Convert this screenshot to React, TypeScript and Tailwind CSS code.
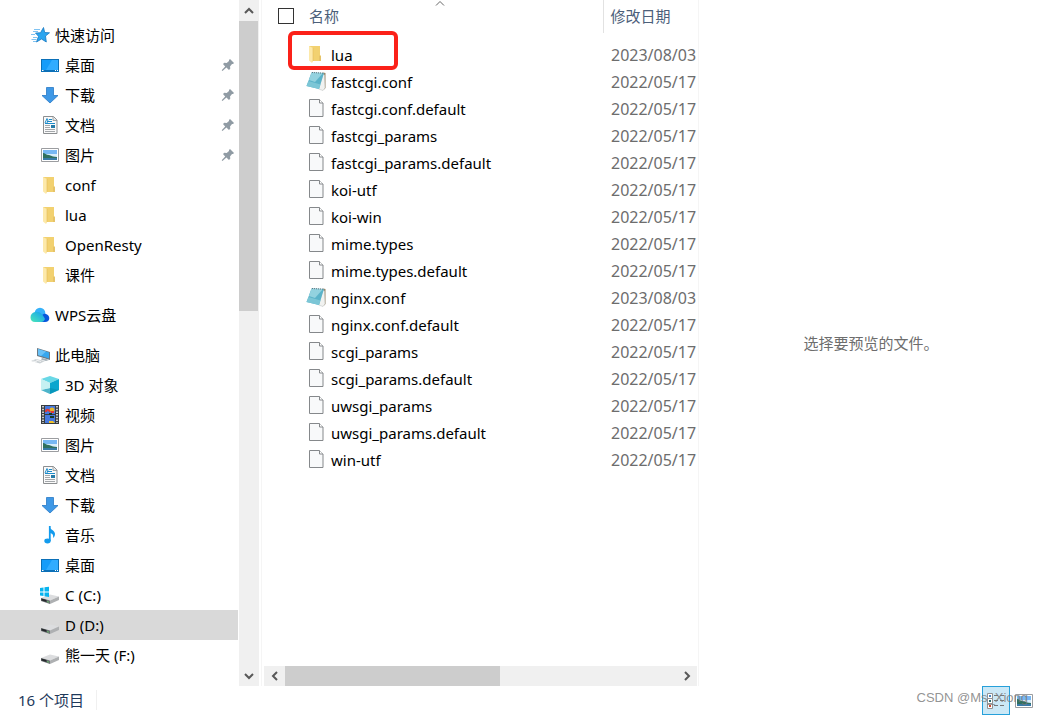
import { useState } from "react";
import type { ReactNode } from "react";
import clsx from "clsx";

type IconName =
  | "star"
  | "desktop"
  | "download"
  | "document"
  | "picture"
  | "folder"
  | "cloud"
  | "computer"
  | "cube"
  | "video"
  | "music"
  | "systemDrive"
  | "drive"
  | "notepad"
  | "file";

const driveBody = (
  <>
    <path d="M1 13l9-3.500 9 2-9 4z" fill="#dcdddf" />
    <path d="M1 13l9 2.500v3.500l-9-3z" fill="#6b6f72" />
    <path d="M10 15.500l9-4v3.500l-9 4z" fill="#aeb0b2" />
    <path d="M1.500 13.500l5 1.500v2l-5-1.500z" fill="#24282b" />
    <path d="M7 16l2 .7v1l-2-.7z" fill="#64b96a" />
  </>
);

const icons: Record<IconName, ReactNode> = {
  star: (
    <>
      <path d="M13.500 2.500l1.200 5 4.800.3-4 3.200.8 6-4.800-3-5 3 2-5.700L5.500 8l5-.2z" fill="#2ba5ef" stroke="#1679c2" strokeWidth=".8" />
      <path d="M4 4.500h6M3 6.500h5M1 9.500h4M3 12.500h4M1.500 14.500h5M3 16.500h3" stroke="#70bcf0" strokeWidth=".9" />
    </>
  ),
  desktop: (
    <>
      <path d="M1 4h18v13H1z" fill="#0b70b8" />
      <path d="M2 5h16v10H2z" fill="#159cf9" />
      <path d="M12 5h6v10H6z" fill="#31acff" />
      <path d="M2 15.500h1.500M15 15.500h1M17 15.500h1" stroke="#fff" />
    </>
  ),
  download: (
    <path d="M6.500 2.500h7v8h4.500l-8 7.500-8-7.500h4.500z" fill="#3e98e6" stroke="#2879c5" strokeWidth=".8" />
  ),
  document: (
    <>
      <path d="M3.500 1.500h10l3.500 3.500v13.500H3.500z" fill="#fafafa" stroke="#8c8f91" />
      <path d="M13 2v3.500h4" fill="#e5e5e5" stroke="#8c8f91" strokeWidth=".8" />
      <path d="M9 4.500h3M8 6.500h4M5 8.500h10" stroke="#1d8bc9" />
      <path d="M5 8l2-4.500 1 1.500-1 3" fill="none" stroke="#1d8bc9" />
      <path d="M5 10.500h5M5 12.500h5M5 14.500h10M5 16.500h10" stroke="#a3a7aa" />
      <path d="M11 10h4v3h-4z" fill="#257ba8" />
    </>
  ),
  picture: (
    <>
      <path d="M1.500 3.500h17v13h-17z" fill="#fff" stroke="#9b9da0" />
      <path d="M3 5h14v10H3z" fill="#77b7f3" />
      <path d="M3 9h14v3H3z" fill="#d7ecfb" />
      <path d="M3 8c2 0 3 2 6 2 3 1 5 2 8 2v1H3z" fill="#31705f" />
      <path d="M3 13h14v2H3z" fill="#397aa7" />
    </>
  ),
  folder: (
    <>
      <path d="M3 2h11v9l1 1v5H5z" fill="#f2d170" />
      <path d="M13 11.500l2 .5v5h-2z" fill="#e6c369" />
      <path d="M3 2l4 2v13.500L6 19l-3-2.500z" fill="#fde9aa" />
      <path d="M7 4v13" stroke="#e4bd59" strokeWidth=".6" />
    </>
  ),
  cloud: (
    <>
      <defs>
        <linearGradient id="cloudLeft" x1="0" y1="1" x2="1" y2="0">
          <stop stopColor="#4be8b7" />
          <stop offset="1" stopColor="#129cf4" />
        </linearGradient>
      </defs>
      <circle cx="10" cy="8" r="5.300" fill="#36b2fa" />
      <path d="M11 17c-1-6 2-9 5-8 5 2 4 8-1 8z" fill="#0857dc" />
      <path d="M5 7c5-1 8 3 10 7-1 2-2 3-4 3H5C-1 17-1 8 5 7z" fill="url(#cloudLeft)" />
    </>
  ),
  computer: (
    <>
      <path d="M7 3l13 4v8L7 11z" fill="#6c7983" />
      <path d="M8 4l11 3.500v6L8 10z" fill="#37a7ef" />
      <path d="M8 4l8 2.500-5 4.400L8 10z" fill="#69c1f7" />
      <path d="M12 13l4 1 3 1-3 1-5-1.500z" fill="#a5b0b7" />
      <path d="M1 16l5-2 9 2-5 2.500z" fill="#cbd1d4" />
      <path d="M3 16l4 1M6 15l5 1.500" stroke="#f2f3f4" />
    </>
  ),
  cube: (
    <>
      <path d="M1 4l9-3 9 3-9 4z" fill="#69d8e6" />
      <path d="M1 4l9 4v11l-9-4z" fill="#b8edf0" />
      <path d="M10 8l9-4v11l-9 4z" fill="#0ba6ce" />
      <path d="M1 15l9-2 9 2-9 4z" fill="#058db0" opacity=".6" />
      <path d="M1 4l9 4v5l-9 2z" fill="#c6f1f2" />
    </>
  ),
  video: (
    <>
      <path d="M1 0h18v19H1z" fill="#393d40" />
      <path d="M5 1h10v8H5zM5 10h10v8H5z" fill="#4679e0" />
      <path d="M3 1v17M17 1v17" stroke="#eee" strokeWidth="1.600" strokeDasharray="1.500 1.200" />
      <circle cx="12" cy="5" r="2.500" fill="#e7b82b" />
      <path d="M6 7c0-3 3-3 4 0M11 7h3" stroke="#e23831" strokeWidth="2" fill="none" />
      <path d="M9 9h3M10 12h4" stroke="#183a24" strokeWidth="2" />
      <path d="M9 16h4l2 2H9z" fill="#f2c329" />
    </>
  ),
  music: (
    <>
      <ellipse cx="7.500" cy="16" rx="3.200" ry="2.400" fill="#139bed" />
      <path d="M9.800 1v15" stroke="#139bed" strokeWidth="1.800" />
      <path d="M9 1c1 4 6 4 6 8 0 2-1 3-2 4 1-5-3-5-4-5z" fill="#139bed" />
    </>
  ),
  systemDrive: (
    <>
      {driveBody}
      <path d="M0 3l3.500-.5v4H0zM4.500 2.200L9 1.700v4.800H4.500zM0 7.500h3.500V11L0 10.500zM4.500 7.500H9V12l-4.500-.8z" fill="#08b4ef" />
    </>
  ),
  drive: driveBody,
  notepad: (
    <>
      <path d="M17 1.500l2.500.5v15l-2 2z" fill="#9a8768" />
      <path d="M17 3l1.500 1 .5 13-2 2.500-4.500-1.500z" fill="#f1f2f0" stroke="#b9bdbd" strokeWidth=".5" />
      <path d="M5.500 1.500l12.500.5-5 16L.500 15z" fill="#5bb3c9" />
      <path d="M5.500 1.500L17 2 9 11l-6-2z" fill="#93d2df" />
      <path d="M.5 15l2-5 12 3.500-1.500 4.500z" fill="#7cc6d6" />
      <path d="M6 1.500l12 .7" stroke="#61747b" strokeDasharray="1 1" />
    </>
  ),
  file: (
    <>
      <path d="M3.500 1.500h10l3.500 3.500v13.500H3.500z" fill="#f8f9fa" stroke="#85888b" />
      <path d="M13.500 1.500v3.500H17" fill="#fff" stroke="#85888b" />
    </>
  ),
};

function Icon({ name }: { name: IconName }) {
  return (
    <svg viewBox="0 0 20 20" className="size-5 shrink-0" aria-hidden="true">
      {icons[name]}
    </svg>
  );
}

function Pin() {
  return (
    <svg viewBox="0 0 14 14" className="size-3.5 shrink-0" aria-hidden="true">
      <path d="M9 1l4 4-1 1h-1l-2 2.500.3 2L8 12l-2.600-2.400L1.500 13l-.8-.8L4.200 8.500 2 6l1.300-1.200 2.400.2L8 3V2z" fill="#909ba4" />
    </svg>
  );
}

function Chevron({ direction }: { direction: "up" | "down" | "left" | "right" }) {
  const paths = {
    up: "M2 8l4-4 4 4",
    down: "M2 4l4 4 4-4",
    left: "M8 2L4 6l4 4",
    right: "M4 2l4 4-4 4",
  };
  return (
    <svg viewBox="0 0 12 12" className="size-3" aria-hidden="true">
      <path d={paths[direction]} fill="none" stroke="#585858" strokeWidth="2" />
    </svg>
  );
}

interface NavItem {
  label: string;
  icon: IconName;
  pinned?: boolean;
}

const groups: { title: string; icon: IconName; items: NavItem[] }[] = [
  {
    title: "快速访问",
    icon: "star",
    items: [
      { label: "桌面", icon: "desktop", pinned: true },
      { label: "下载", icon: "download", pinned: true },
      { label: "文档", icon: "document", pinned: true },
      { label: "图片", icon: "picture", pinned: true },
      { label: "conf", icon: "folder" },
      { label: "lua", icon: "folder" },
      { label: "OpenResty", icon: "folder" },
      { label: "课件", icon: "folder" },
    ],
  },
  { title: "WPS云盘", icon: "cloud", items: [] },
  {
    title: "此电脑",
    icon: "computer",
    items: [
      { label: "3D 对象", icon: "cube" },
      { label: "视频", icon: "video" },
      { label: "图片", icon: "picture" },
      { label: "文档", icon: "document" },
      { label: "下载", icon: "download" },
      { label: "音乐", icon: "music" },
      { label: "桌面", icon: "desktop" },
      { label: "C (C:)", icon: "systemDrive" },
      { label: "D (D:)", icon: "drive" },
      { label: "熊一天 (F:)", icon: "drive" },
    ],
  },
];

const files: { name: string; icon: IconName; date: string }[] = [
  { name: "lua", icon: "folder", date: "2023/08/03" },
  { name: "fastcgi.conf", icon: "notepad", date: "2022/05/17" },
  { name: "fastcgi.conf.default", icon: "file", date: "2022/05/17" },
  { name: "fastcgi_params", icon: "file", date: "2022/05/17" },
  { name: "fastcgi_params.default", icon: "file", date: "2022/05/17" },
  { name: "koi-utf", icon: "file", date: "2022/05/17" },
  { name: "koi-win", icon: "file", date: "2022/05/17" },
  { name: "mime.types", icon: "file", date: "2022/05/17" },
  { name: "mime.types.default", icon: "file", date: "2022/05/17" },
  { name: "nginx.conf", icon: "notepad", date: "2023/08/03" },
  { name: "nginx.conf.default", icon: "file", date: "2022/05/17" },
  { name: "scgi_params", icon: "file", date: "2022/05/17" },
  { name: "scgi_params.default", icon: "file", date: "2022/05/17" },
  { name: "uwsgi_params", icon: "file", date: "2022/05/17" },
  { name: "uwsgi_params.default", icon: "file", date: "2022/05/17" },
  { name: "win-utf", icon: "file", date: "2022/05/17" },
];

function NavRow({
  item,
  root,
  selected,
  onSelect,
}: {
  item: NavItem;
  root?: boolean;
  selected: boolean;
  onSelect: () => void;
}) {
  return (
    <button
      type="button"
      onClick={onSelect}
      className={clsx(
        "flex h-[30px] w-full items-center gap-[5px] pr-[3px] text-left whitespace-nowrap",
        root ? "pl-[30px]" : "pl-10",
        selected && "bg-[#d9d9d9]",
      )}
    >
      <Icon name={item.icon} />
      <span className="grow">{item.label}</span>
      {item.pinned && <Pin />}
    </button>
  );
}

function Sidebar() {
  const [selected, setSelected] = useState("此电脑/D (D:)");

  return (
    <div className="flex min-h-0 border-r border-[#f5f5f5]">
      <nav className="flex min-w-0 grow flex-col gap-2.5 overflow-hidden pt-5">
        {groups.map((group) => (
          <div key={group.title}>
            <NavRow
              root
              item={{ label: group.title, icon: group.icon }}
              selected={selected === group.title}
              onSelect={() => setSelected(group.title)}
            />
            {group.items.map((item) => {
              const id = `${group.title}/${item.label}`;
              return (
                <NavRow
                  key={id}
                  item={item}
                  selected={selected === id}
                  onSelect={() => setSelected(id)}
                />
              );
            })}
          </div>
        ))}
      </nav>
      <div className="mr-0.5 ml-px flex w-5 shrink-0 flex-col bg-[#f0f0f0]">
        <button type="button" aria-label="向上滚动" className="flex h-[21px] items-center justify-center">
          <Chevron direction="up" />
        </button>
        <div className="flex min-h-0 grow flex-col">
          <div className="mr-px h-[45%] bg-[#cdcdcd]" />
        </div>
        <button type="button" aria-label="向下滚动" className="flex h-[21px] items-center justify-center">
          <Chevron direction="down" />
        </button>
      </div>
    </div>
  );
}

function FileList() {
  return (
    <main className="flex min-h-0 min-w-0 flex-col border-r border-[#f5f5f5]">
      <div className="min-h-0 grow overflow-hidden">
        <table className="w-full table-fixed text-left">
          <thead className="text-[#4c607a]">
            <tr className="h-[33px]">
              <th className="relative p-0 pb-0.5 font-normal">
                <div className="absolute inset-x-0 top-0 flex justify-center pl-4">
                  <svg viewBox="0 0 10 6" className="h-1.5 w-2.5" aria-hidden="true">
                    <path d="M1 5.500l4-4 4 4" fill="none" stroke="#666" />
                  </svg>
                </div>
                <div className="flex items-center gap-[15px] pl-4">
                  <input
                    type="checkbox"
                    aria-label="全选"
                    className="size-4 appearance-none border border-[#333] bg-white checked:bg-[#0078d7]"
                  />
                  名称
                </div>
              </th>
              <th className="w-[95px] border-l border-[#e2e2e2] p-0 pb-0.5 pl-[7px] font-normal">修改日期</th>
            </tr>
          </thead>
          <tbody className="font-['Noto_Sans','Noto_Sans_CJK_SC',sans-serif] before:block before:h-2">
            {files.map((file) => (
              <tr key={file.name} className="h-[27px]">
                <td className="relative p-0">
                  {file.name === "lua" && (
                    <div className="absolute -top-2.5 left-[26px] h-[39px] w-[110px] rounded-md border-4 border-[#fb2119]" />
                  )}
                  <div className="flex items-center gap-[5px] pl-11 text-black">
                    <span className="pb-0.5">
                      <Icon name={file.icon} />
                    </span>
                    {file.name}
                  </div>
                </td>
                <td className="p-0 pl-2 text-base leading-5 text-[#6d6d6d]">{file.date}</td>
              </tr>
            ))}
          </tbody>
        </table>
      </div>
      <div className="mr-px ml-0.5 flex h-5 shrink-0 bg-[#f0f0f0]">
        <button type="button" aria-label="向左滚动" className="flex w-[21px] items-center justify-center">
          <Chevron direction="left" />
        </button>
        <div className="flex grow">
          <div className="w-[55%] bg-[#cdcdcd]" />
        </div>
        <button type="button" aria-label="向右滚动" className="flex w-[21px] items-center justify-center">
          <Chevron direction="right" />
        </button>
      </div>
    </main>
  );
}

function StatusBar() {
  return (
    <footer className="relative flex h-[29px] shrink-0 items-center justify-between pr-[9px] pl-[18px] text-[#1e395b]">
      <span className="mb-0.5 border-r border-[#f0f0f0] pr-3">16 个项目</span>
      <div className="flex h-full items-center gap-1">
        <button
          type="button"
          aria-label="详细信息"
          className="flex h-full w-7 items-center justify-center border border-[#26a0da] bg-[#cbe8f6]"
        >
          <svg viewBox="0 0 20 20" className="size-5" aria-hidden="true">
            <path d="M1.500 2.500h5v5h-5zM1.500 7.500h5v5h-5zM1.500 12.500h5v5h-5z" fill="#fff" stroke="#929292" />
            <path d="M3 4h2v2H3z" fill="#4787c5" />
            <path d="M3 9h2v2H3z" fill="#276d72" />
            <path d="M3 14h2v2H3z" fill="#cf452c" />
            <path d="M8 4.500h4M14 4.500h4M8 9.500h4M14 9.500h4M8 14.500h4M14 14.500h4" stroke="#777" />
          </svg>
        </button>
        <button type="button" aria-label="大缩略图" className="flex h-full w-5 items-center justify-center">
          <Icon name="picture" />
        </button>
      </div>
      <span className="pointer-events-none absolute top-1 right-[15px] font-['Liberation_Sans',sans-serif] text-[13px] leading-4 text-[#777]/80">
        CSDN @Ms_Xiong
      </span>
    </footer>
  );
}

export default function App() {
  return (
    <div className="flex h-screen flex-col overflow-hidden bg-white font-['Noto_Sans','Noto_Sans_CJK_SC',sans-serif] text-[15px] leading-5 text-black">
      <div className="grid min-h-0 grow grid-cols-[262px_437fr_344fr] grid-rows-[minmax(0,1fr)]">
        <Sidebar />
        <FileList />
        <aside className="flex items-center justify-center text-[#6d6d6d]">选择要预览的文件。</aside>
      </div>
      <StatusBar />
    </div>
  );
}
